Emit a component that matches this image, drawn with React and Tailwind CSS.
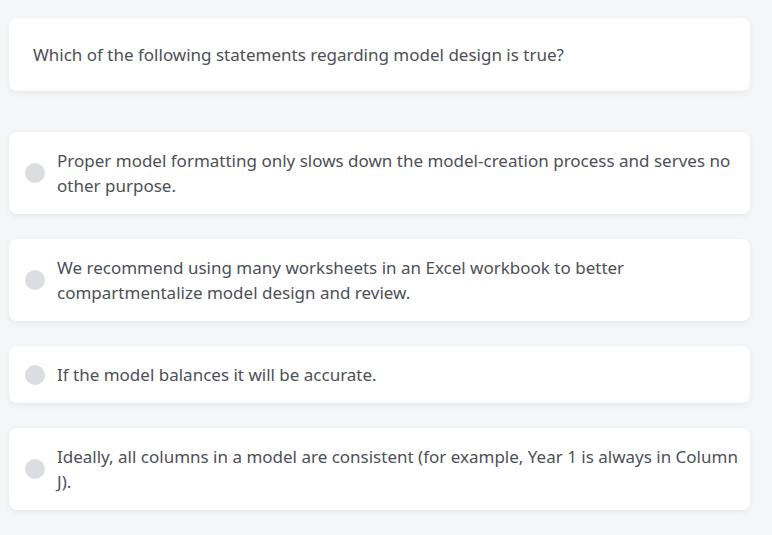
import React from "react";

const options = [
  "Proper model formatting only slows down the model-creation process and serves no other purpose.",
  "We recommend using many worksheets in an Excel workbook to better compartmentalize model design and review.",
  "If the model balances it will be accurate.",
  "Ideally, all columns in a model are consistent (for example, Year 1 is always in Column J).",
];

export default function App() {
  return (
    <div
      className="min-h-[535px] bg-[#f5f6f8] pt-[18px] pl-[9px] text-[#4d5057]"
      style={{ fontFamily: '"Noto Sans", "Open Sans", sans-serif' }}
    >
      <div className="w-[741px]">
        <div className="rounded-lg bg-white px-6 py-6 text-[17px] leading-[25px] shadow-[0_2px_6px_rgba(0,0,0,0.06)]">
          Which of the following statements regarding model design is true?
        </div>
        <div className="mt-[41px] flex flex-col gap-[25px]">
          {options.map((o) => (
            <div
              key={o}
              className="flex items-center gap-3 rounded-lg bg-white py-4 pl-4 pr-2 shadow-[0_2px_6px_rgba(0,0,0,0.06)]"
            >
              <span className="h-5 w-5 shrink-0 rounded-full bg-[#dcdde0]" />
              <span className="text-[17px] leading-[25px]">{o}</span>
            </div>
          ))}
        </div>
      </div>
    </div>
  );
}
